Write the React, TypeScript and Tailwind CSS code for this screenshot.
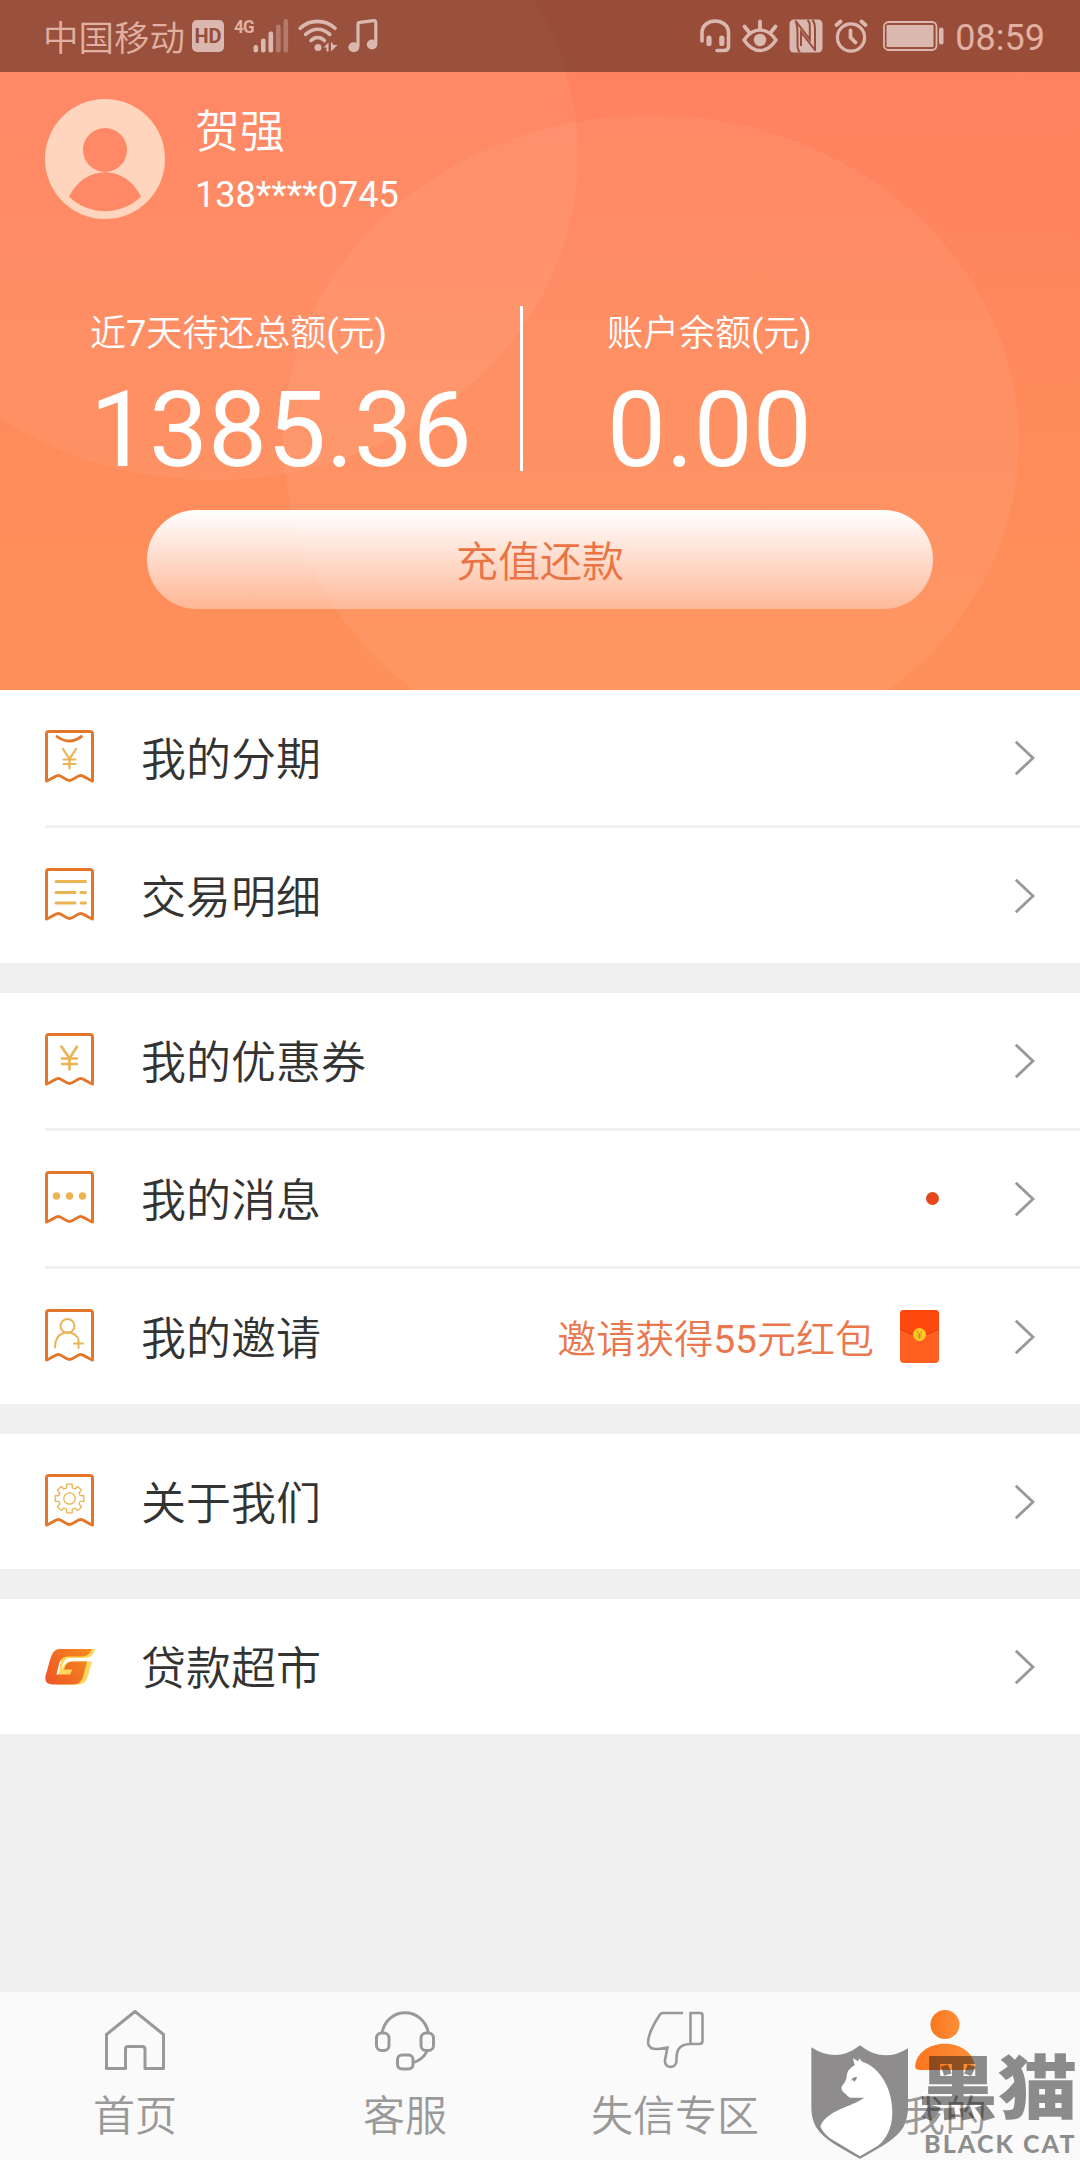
import React from "react";

const ORANGE = "#e2772b";
const AMBER = "#eab354";
const TINT = "#dbb8af";
const BAR = "#984e3a";

function StatusBar() {
  return (
    <div className="relative flex h-[72px] items-center justify-between bg-black/40 pl-[43px] pr-[35px] text-[#e0b0a2]">
      <div className="flex h-[34px] items-center">
        <span className="mt-[6px] w-[149px] whitespace-nowrap text-[35.5px] font-[350] leading-[34px]">中国移动</span>
        <div className="flex h-[32px] w-[32px] items-center justify-center rounded-[5px] bg-[#dbb8af] font-['Roboto'] text-[20px] font-bold leading-none text-[#964e3b]">
          HD
        </div>
        <div className="ml-[10px] h-[34px] w-[20px] origin-top-left scale-x-90 font-['Roboto'] text-[19px] font-bold leading-[16px] tracking-[-1px]">
          4G
        </div>
        <svg className="-ml-px" width="36" height="34" viewBox="0 0 36 34" fill={TINT}>
          <rect x="0.5" y="26" width="4.6" height="7.5" rx="2.3" />
          <rect x="8" y="19.5" width="4.6" height="14" rx="2" />
          <rect x="15.5" y="12.5" width="4.6" height="21" rx="2" />
          <rect x="23" y="5.5" width="4.6" height="28" rx="2" opacity="0.4" />
          <rect x="30.5" y="0" width="4.6" height="33.5" rx="2" opacity="0.4" />
        </svg>
        <svg className="ml-[9px]" width="40" height="34" viewBox="0 0 40 34" fill="none" stroke={TINT} strokeWidth="3.6" strokeLinecap="round">
          <path d="M2.2 9.3C12 0 27 0 37 9.3" />
          <path d="M7.6 15.4C15 8.5 24.5 8.5 31.8 15.4" />
          <path d="M13 21.5C17 17.6 22.4 17.6 26.4 21.5" />
          <circle cx="20" cy="28.5" r="3.5" fill={TINT} stroke="none" />
          <path d="M25.5 28.5l5-5v9h-2v-4zM33 23v9.5l6.5-6.5h-3.5z" fill={TINT} stroke="none" />
        </svg>
        <svg className="ml-[10px]" width="31" height="34" viewBox="0 0 31 34" fill="none" stroke={TINT} strokeWidth="3.2">
          <path d="M10 28V5.5Q10 3.5 12 3.3L25.5 1.6Q27.8 1.4 27.8 3.6V25" />
          <ellipse cx="5.8" cy="28.3" rx="5.4" ry="5" fill={TINT} stroke="none" />
          <ellipse cx="24" cy="25.5" rx="5.2" ry="5" fill={TINT} stroke="none" />
        </svg>
      </div>
      <div className="flex h-[34px] items-center">
        <svg width="31" height="34" viewBox="0 0 31 34" fill="none" stroke={TINT} strokeWidth="3.6" strokeLinecap="round">
          <path d="M2 22V14C2 -2 28.5 -2 28.5 14V27Q28.5 31.5 24 31.5H17" />
          <path d="M9 19v5.5M21.8 19v5.5" strokeWidth="5.2" />
        </svg>
        <svg className="ml-[11px]" width="36" height="34" viewBox="0 0 36 34" fill="none" stroke={TINT} strokeWidth="3.4" strokeLinecap="round">
          <path d="M2 21Q9 11 18 11Q27 11 34 21Q27 31.5 18 31.5Q9 31.5 2 21Z" strokeLinejoin="round" />
          <circle cx="18" cy="21" r="6.2" fill={TINT} stroke="none" />
          <path d="M18 2.5v6M2.5 7.5l4 5M33.5 7.5l-4 5" strokeWidth="3.8" />
        </svg>
        <svg className="ml-[11px]" width="34" height="34" viewBox="0 0 34 34" fill="none">
          <rect x="0.5" y="0.5" width="33" height="33" rx="4.5" fill={TINT} />
          <path d="M6.5 1.5Q8.5 6 8.5 14V26Q8.5 31 11 33M7.5 3L20.8 20.5V6Q20.8 3 18.5 1M12 27V13L25.5 30.5M23.5 1Q26 4 26 10V32" stroke={BAR} strokeWidth="2" />
        </svg>
        <svg className="ml-[11px]" width="34" height="34" viewBox="0 0 34 34" fill="none" stroke={TINT} strokeWidth="3.2" strokeLinecap="round">
          <circle cx="17" cy="18.5" r="13.6" />
          <path d="M16.5 11.5V18.5L21.5 23.5" strokeWidth="3.8" />
          <path d="M2.5 6l4-3.5M31.5 6l-4-3.5" strokeWidth="3.8" />
        </svg>
        <svg className="ml-[15px]" width="61" height="30" viewBox="0 0 61 30" fill="none">
          <rect x="1" y="1" width="52.5" height="28" rx="4.5" stroke={TINT} strokeWidth="1.8" />
          <rect x="3.5" y="4" width="47" height="22" rx="1" fill={TINT} />
          <rect x="56" y="6.5" width="4.5" height="17" rx="2" fill={TINT} />
        </svg>
        <span className="ml-[11px] mt-[3px] text-[36px] leading-[34px]">08:59</span>
      </div>
    </div>
  );
}

function Header() {
  return (
    <header className="relative h-[690px] overflow-hidden bg-linear-to-b from-[#ff805f] to-[#fe9159] text-white">
      <svg className="absolute inset-0" width="1080" height="690" viewBox="0 0 1080 690" fill="#fff" fillOpacity="0.055">
        <ellipse cx="213" cy="154" rx="365" ry="326" />
        <ellipse cx="651" cy="441" rx="368" ry="326" />
      </svg>
      <StatusBar />
      <div className="relative flex h-[147px] items-start pl-[45px] pt-[27px]">
        <svg width="120" height="120" viewBox="0 0 120 120">
          <circle cx="60" cy="60" r="60" fill="#ffd5bd" />
          <circle cx="60" cy="51" r="22" fill="#ff8866" />
          <path d="M24 97.5C40 65 80 65 96 97.5C76 117 44 117 24 97.5Z" fill="#ff8866" />
        </svg>
        <div className="ml-[30px] flex flex-col pt-[2px]">
          <span className="h-[63px] text-[45px] font-[350] leading-[63px]">贺强</span>
          <span className="mt-[6px] text-[36px] leading-[50px]">138****0745</span>
        </div>
      </div>
      <div className="relative mt-[87px] flex h-[165px]">
        <div className="flex w-[520px] flex-col pl-[90px]">
          <span className="mt-[2px] whitespace-nowrap text-[36px] font-[350] leading-[52px]">
            近<span className="font-normal">7</span>天待还总额<span className="font-normal">(</span>元<span className="font-normal">)</span>
          </span>
          <span className="mt-[11px] text-[105px] leading-[120px]">1385.36</span>
        </div>
        <div className="w-[3px] bg-white" />
        <div className="flex flex-col pl-[84px]">
          <span className="mt-[2px] whitespace-nowrap text-[36px] font-[350] leading-[52px]">
            账户余额<span className="font-normal">(</span>元<span className="font-normal">)</span>
          </span>
          <span className="mt-[11px] text-[105px] leading-[120px]">0.00</span>
        </div>
      </div>
      <button className="relative mx-auto mt-[39px] flex h-[99px] w-[786px] items-center justify-center rounded-full bg-linear-to-b from-white to-white/35 pt-[6px] text-[42px] font-[350] text-[#ea7343]">
        充值还款
      </button>
    </header>
  );
}

function Ticket({ children }: { children: React.ReactNode }) {
  return (
    <svg className="-mt-[2px]" width="50" height="54" viewBox="0 0 50 54" fill="none" strokeLinecap="round" strokeLinejoin="round">
      <path
        d="M1.5 51V4Q1.5 1.5 4 1.5H45Q47.5 1.5 47.5 4V51C43 49.5 39 45.5 35.5 45.5C32 45.5 28.5 50.5 24.5 50.5C20.5 50.5 17 45.5 13.5 45.5C10 45.5 6 49.5 1.5 51Z"
        stroke={ORANGE}
        strokeWidth="3"
      />
      {children}
    </svg>
  );
}

const InstalmentIcon = (
  <Ticket>
    <path d="M12 6.5Q24 15.5 36.5 6.5" stroke={ORANGE} strokeWidth="2.8" />
    <path d="M18 19L24.5 29L31 19M24.5 29V38.5M18.5 29.5H30.5M18.5 34H30.5" stroke={AMBER} strokeWidth="2.2" />
  </Ticket>
);

const DetailIcon = (
  <Ticket>
    <path d="M11 13.5H40.5M11 24.5H30M36 24.5H40.5M11 35H30M36 35H40.5" stroke={AMBER} strokeWidth="3" />
  </Ticket>
);

const CouponIcon = (
  <Ticket>
    <path d="M16.5 13.5L24.5 25.5L32 13.5M24.5 25.5V36.5M17 25.5H32M17 31H32" stroke={AMBER} strokeWidth="2.6" />
  </Ticket>
);

const MessageIcon = (
  <Ticket>
    <g fill={AMBER}>
      <circle cx="11.5" cy="25" r="3.7" />
      <circle cx="24.5" cy="25" r="3.7" />
      <circle cx="37.5" cy="25" r="3.7" />
    </g>
  </Ticket>
);

const InviteIcon = (
  <Ticket>
    <g stroke={AMBER} strokeWidth="1.9">
      <circle cx="22.5" cy="17" r="7" />
      <path d="M10 38.5C10 21 27 20 32.5 28.5M29 34.5H38M33.5 30V39" />
    </g>
  </Ticket>
);

const gearPath = (() => {
  const points: string[] = [];
  for (let i = 0; i < 8; i++) {
    const base = (i * Math.PI) / 4 - Math.PI / 2;
    for (const [offset, radius] of [[-0.26, 11], [-0.19, 14.6], [0.19, 14.6], [0.26, 11]]) {
      points.push(`${(24.5 + radius * Math.cos(base + offset)).toFixed(2)} ${(24.5 + radius * Math.sin(base + offset)).toFixed(2)}`);
    }
  }
  return `M${points.join("L")}Z`;
})();

const AboutIcon = (
  <Ticket>
    <g stroke={AMBER} strokeWidth="1.3">
      <path d={gearPath} />
      <circle cx="24.5" cy="24.5" r="5.7" />
    </g>
  </Ticket>
);

const MarketIcon = (
  <svg width="51" height="54" viewBox="0 0 51 54">
    <defs>
      <linearGradient id="market" x1="0" y1="0.7" x2="1" y2="0.2">
        <stop offset="0" stopColor="#ee5a24" />
        <stop offset="1" stopColor="#f58a1f" />
      </linearGradient>
    </defs>
    <path
      d="M18 9H50Q48 18 40 18H25Q19 18 17 27L15.5 32H23L21 36H13Q19 21 26 21.5H47L43 36Q40.5 44.5 34 44.5H12Z"
      fill="#ffd75a"
    />
    <path
      d="M14 9H47Q44 16.5 37 16.5H22Q16 17 14 24L11.5 34.5H25L27.5 29.5H19Q21 21.5 27 21.5H42L38 37Q35.5 44.5 29 44.5H8Q-1 44.5 0.5 36L5 20Q8 9 14 9Z"
      fill="url(#market)"
    />
  </svg>
);

const Chevron = () => (
  <svg width="22" height="36" viewBox="0 0 22 36" fill="none" stroke="#999" strokeWidth="2.8">
    <path d="M1.8 1.8L19 18L1.8 34.2" />
  </svg>
);

const Envelope = () => (
  <svg className="ml-[26px]" width="39" height="53" viewBox="0 0 39 53">
    <rect width="39" height="53" rx="4" fill="#ff601f" />
    <path d="M0 19V4Q0 0 4 0H35Q39 0 39 4V19Q19.5 31 0 19Z" fill="#ff490c" />
    <path d="M0 19Q19.5 31 39 19" fill="none" stroke="#dc3b13" strokeWidth="1" />
    <circle cx="19.5" cy="24.5" r="6.5" fill="#ffc928" />
    <path d="M17 21l2.5 3.5L22 21M19.5 24.5v4.5M17.3 25h4.4M17.3 27h4.4" fill="none" stroke="#c98a12" strokeWidth="0.9" />
  </svg>
);

function Row({ icon, label, children }: { icon: React.ReactNode; label: string; children?: React.ReactNode }) {
  return (
    <div className="flex h-[135px] items-center bg-white pl-[45px] pr-[44px]">
      <div className="w-[96px]">{icon}</div>
      <span className="mt-[7px] text-[45px] font-[350] leading-[60px] text-[#333]">{label}</span>
      <div className="ml-auto mr-[75px] flex items-center">{children}</div>
      <Chevron />
    </div>
  );
}

const Line = () => (
  <div className="h-[3px] bg-white pl-[45px]">
    <div className="h-full bg-[#f0f0f0]" />
  </div>
);

const tabIcon = { width: 60, height: 62, viewBox: "0 0 60 62", fill: "none", stroke: "#999", strokeWidth: 3 } as const;

function Tab({ label, children }: { label: string; children: React.ReactNode }) {
  return (
    <div className="flex flex-1 flex-col items-center pt-[17px]">
      {children}
      <span className="mt-[16px] text-[42px] font-[350] leading-[60px] text-[#999]">{label}</span>
    </div>
  );
}

function TabBar() {
  return (
    <nav className="mt-auto flex h-[168px] bg-[#fafafa]">
      <Tab label="首页">
        <svg {...tabIcon} strokeLinejoin="round">
          <path d="M1.5 59.5V25.5L30 2.5L58.5 25.5V59.5H40V40Q40 37.5 37 37.5H23Q20.5 37.5 20.5 40V59.5Z" />
        </svg>
      </Tab>
      <Tab label="客服">
        <svg {...tabIcon}>
          <path d="M7 24C12 -3 48 -3 53.5 24M52 42Q48 51 38 53.5" />
          <rect x="1.5" y="24" width="12.5" height="17.5" rx="5" />
          <rect x="46" y="24" width="12.5" height="17.5" rx="5" />
          <rect x="22.5" y="46" width="15.5" height="14" rx="4.5" />
        </svg>
      </Tab>
      <Tab label="失信专区">
        <svg {...tabIcon} strokeWidth="2.6">
          <path d="M38 4H18Q15.5 4 14 7Q3 24 3 34Q4 40.5 13 40L22.5 38.5L20 51C19 60 31 60 31.5 52C31 40 35 35.5 45 35H54Q57.5 35 57.5 32V6Q57.5 4 55 4H45.5V35" />
        </svg>
      </Tab>
      <Tab label="我的">
        <svg width="60" height="62" viewBox="0 0 60 62">
          <defs>
            <linearGradient id="me" x1="0" x2="1">
              <stop offset="0" stopColor="#fb751e" />
              <stop offset="1" stopColor="#fe8f3a" />
            </linearGradient>
          </defs>
          <g fill="url(#me)">
            <circle cx="30" cy="15.5" r="14.5" />
            <path d="M5 61Q-1 61 0.5 55C6 28 54 28 59.5 55Q61 61 55 61Z" />
          </g>
        </svg>
      </Tab>
    </nav>
  );
}

function Watermark() {
  return (
    <div className="absolute bottom-0 right-0 flex h-[117px] w-[270px] text-[#141212]/48">
      <svg className="shrink-0" width="100" height="117" viewBox="60 160 300 350">
        <path
          d="M64 172Q140 222 210 166Q280 222 354 175V350C354 430 310 450 210 507C110 450 64 430 64 350Z"
          fill="#8e8c8c"
        />
        <path
          d="M189 205L204 214L208 206L217 216C270 232 309 300 307 370C306 415 290 445 264 468L210 499L120 445Q100 430 91 410C110 360 190 350 222 324H180Q172 320 168 313Q152 303 155 290Q172 270 170 258Q173 236 194 226Z"
          fill="#fff"
        />
        <path d="M183 272Q190 260 201 262Q200 272 190 276Q193 268 183 272Z" fill="#8e8c8c" />
      </svg>
      <div className="ml-[14px] flex flex-col">
        <span className="-ml-[6px] mt-[5px] h-[84px] w-[140px] origin-left scale-x-[1.14] whitespace-nowrap text-[70px] font-black leading-[84px]">
          黑猫
        </span>
        <span className="-mt-px whitespace-nowrap font-['Lato'] text-[25px] font-black leading-[24px] tracking-[2.1px]">
          BLACK CAT
        </span>
      </div>
    </div>
  );
}

export default function App() {
  return (
    <div className="relative flex h-[2160px] w-[1080px] flex-col overflow-hidden bg-[#f0f0f0] font-['Roboto','Noto_Sans_CJK_SC',sans-serif]">
      <Header />
      <main className="flex flex-col gap-[30px]">
        <section>
          <Row icon={InstalmentIcon} label="我的分期" />
          <Line />
          <Row icon={DetailIcon} label="交易明细" />
        </section>
        <section>
          <Row icon={CouponIcon} label="我的优惠券" />
          <Line />
          <Row icon={MessageIcon} label="我的消息">
            <div className="size-[13px] rounded-full bg-[#e64619]" />
          </Row>
          <Line />
          <Row icon={InviteIcon} label="我的邀请">
            <span className="mt-[6px] text-[39px] font-[350] leading-[54px] text-[#e9784f]">
              邀请获得<span className="font-normal">55</span>元红包
            </span>
            <Envelope />
          </Row>
        </section>
        <section>
          <Row icon={AboutIcon} label="关于我们" />
        </section>
        <section>
          <Row icon={MarketIcon} label="贷款超市" />
        </section>
      </main>
      <TabBar />
      <Watermark />
    </div>
  );
}
